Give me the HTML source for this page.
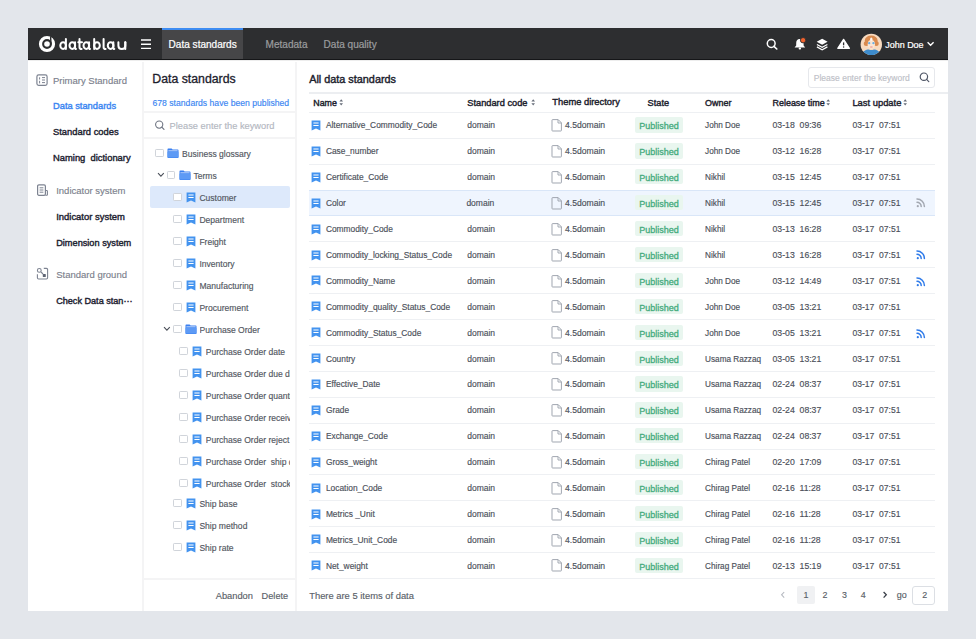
<!DOCTYPE html>
<html><head><meta charset="utf-8"><style>
html,body{margin:0;padding:0}
body{width:976px;height:639px;background:#e3e6eb;position:relative;overflow:hidden;font-family:"Liberation Sans", sans-serif}
.t{position:absolute;white-space:nowrap}
.r{-webkit-text-stroke:0.15px currentColor}
.m{-webkit-text-stroke:0.4px currentColor}
</style></head><body>
<div style="position:absolute;left:28px;top:28px;width:920px;height:583px;background:#fff"></div>
<div style="position:absolute;left:28px;top:28px;width:920px;height:32px;background:#2d2e30"></div>
<div style="position:absolute;left:28px;top:58.8px;width:920px;height:1.2px;background:#151618"></div>
<div style="position:absolute;left:28px;top:60px;width:920px;height:1px;background:rgba(0,0,0,0.07)"></div>
<div style="position:absolute;left:162px;top:28px;width:81px;height:30.8px;background:#464648"></div>
<div style="position:absolute;left:162px;top:28px;width:81px;height:2px;background:#3e8cf2"></div>
<svg style="position:absolute;left:36px;top:32px" width="24" height="24" viewBox="0 0 24 24"><circle cx="11" cy="12" r="6.5" fill="none" stroke="#fff" stroke-width="3.2"/>
<circle cx="11" cy="12" r="2.8" fill="#fff"/>
<line x1="14.6" y1="4.2" x2="15" y2="12.5" stroke="#2d2e30" stroke-width="1.4"/></svg>
<svg style="position:absolute;left:0px;top:0px" width="976" height="64" viewBox="0 0 976 64"><ellipse cx="63.1" cy="45.6" rx="2.8" ry="3.35" fill="none" stroke="#fff" stroke-width="2.0"/><line x1="65.9" y1="39.0" x2="65.9" y2="49.0" stroke="#fff" stroke-width="2.0" stroke-linecap="round"/><ellipse cx="72.3" cy="45.6" rx="2.8" ry="3.35" fill="none" stroke="#fff" stroke-width="2.0"/><path d="M75.05 42.3 V47.9 Q75.05 49.0 76.0 48.9" fill="none" stroke="#fff" stroke-width="2.0" stroke-linecap="round"/><path d="M79.5 39.0 V47.2 Q79.5 49.0 81.6 49.0" fill="none" stroke="#fff" stroke-width="2.0" stroke-linecap="round"/><line x1="78.3" y1="42.3" x2="82.0" y2="42.3" stroke="#fff" stroke-width="2.0" stroke-linecap="round"/><ellipse cx="86.3" cy="45.6" rx="2.8" ry="3.35" fill="none" stroke="#fff" stroke-width="2.0"/><path d="M89.05 42.3 V47.9 Q89.05 49.0 90.0 48.9" fill="none" stroke="#fff" stroke-width="2.0" stroke-linecap="round"/><ellipse cx="97.0" cy="45.6" rx="2.8" ry="3.35" fill="none" stroke="#fff" stroke-width="2.0"/><line x1="94.2" y1="39.0" x2="94.2" y2="49.0" stroke="#fff" stroke-width="2.0" stroke-linecap="round"/><path d="M103.6 39.0 V47.2 Q103.6 49.0 105.6 49.0" fill="none" stroke="#fff" stroke-width="2.0" stroke-linecap="round"/><ellipse cx="110.6" cy="45.6" rx="2.8" ry="3.35" fill="none" stroke="#fff" stroke-width="2.0"/><path d="M113.35 42.3 V47.9 Q113.35 49.0 114.3 48.9" fill="none" stroke="#fff" stroke-width="2.0" stroke-linecap="round"/><path d="M118.4 42.3 V45.8 Q118.4 49.0 121.8 49.0 Q125.3 49.0 125.3 45.8 V42.3" fill="none" stroke="#fff" stroke-width="2.0" stroke-linecap="round"/><line x1="125.3" y1="42.3" x2="125.3" y2="49.0" stroke="#fff" stroke-width="2.0" stroke-linecap="round"/></svg>
<svg style="position:absolute;left:140px;top:38px" width="12" height="12" viewBox="0 0 12 12"><path d="M1 2H11M1 6.2H11M1 10.4H11" stroke="#fff" stroke-width="1.4"/></svg>
<div class="t m" style="left:168.60px;top:39.00px;font-size:10.05px;line-height:11px;color:#ffffff;font-weight:400;-webkit-text-stroke:0.22px #fff;">Data standards</div>
<div class="t m" style="left:265.60px;top:39.00px;font-size:10.05px;line-height:11px;color:#9b9c9e;font-weight:400;-webkit-text-stroke:0.22px #9b9c9e;">Metadata</div>
<div class="t m" style="left:323.60px;top:39.00px;font-size:10.05px;line-height:11px;color:#9b9c9e;font-weight:400;-webkit-text-stroke:0.22px #9b9c9e;">Data quality</div>
<svg style="position:absolute;left:764px;top:36px" width="16" height="16" viewBox="0 0 16 16"><circle cx="7.2" cy="7.5" r="3.9" fill="none" stroke="#fff" stroke-width="1.5"/><path d="M10 10.3L12.8 13" stroke="#fff" stroke-width="1.6" stroke-linecap="round"/></svg>
<svg style="position:absolute;left:792px;top:36px" width="16" height="16" viewBox="0 0 16 16"><path d="M7.8 3C5.2 3 4.2 5 4.2 7.2V9.6L2.6 11.4H13.2L11.6 9.6V7.2C11.6 5 10.4 3 7.8 3Z" fill="#fff"/><rect x="6.7" y="11.6" width="2.3" height="2" rx=".8" fill="#fff"/><circle cx="11.1" cy="4.2" r="2.7" fill="#f0622d" stroke="#2d2e30" stroke-width="0.9"/></svg>
<svg style="position:absolute;left:814px;top:36px" width="16" height="16" viewBox="0 0 16 16"><path d="M8.15 2.8L13.6 5.8L8.15 8.8L2.7 5.8Z" fill="#fff"/><path d="M2.9 8.5L8.15 11.4L13.4 8.5M2.9 10.9L8.15 13.8L13.4 10.9" fill="none" stroke="#fff" stroke-width="1.2"/></svg>
<svg style="position:absolute;left:835px;top:36px" width="16" height="16" viewBox="0 0 16 16"><path d="M8.6 3.4L14.4 12.3H2.8Z" fill="#fff" stroke="#fff" stroke-width="1.3" stroke-linejoin="round"/><path d="M8.6 6.4V9.3" stroke="#2d2e30" stroke-width="1.3"/><circle cx="8.6" cy="10.9" r="0.75" fill="#2d2e30"/></svg>
<svg style="position:absolute;left:860px;top:33px" width="23" height="23" viewBox="0 0 23 23"><defs><clipPath id="av"><circle cx="11.3" cy="11.4" r="10.7"/></clipPath></defs>
<circle cx="11.3" cy="11.4" r="10.7" fill="#f8dbc0"/>
<g clip-path="url(#av)">
<ellipse cx="11.2" cy="7.6" rx="6.4" ry="5" fill="#d98a4e"/>
<circle cx="6.3" cy="10.6" r="2.5" fill="#d98a4e"/><circle cx="16.2" cy="10.6" r="2.5" fill="#d98a4e"/>
<ellipse cx="11.3" cy="11.3" rx="3.6" ry="4.4" fill="#fce6d3"/>
<ellipse cx="11.3" cy="6.4" rx="1.2" ry="1.8" fill="#fff6ee"/>
<circle cx="9.2" cy="10.2" r="1.1" fill="#68aee4"/><circle cx="13.4" cy="10.2" r="1.1" fill="#68aee4"/>
<ellipse cx="11.3" cy="14" rx="1.6" ry="0.7" fill="#f2a49c"/>
<path d="M1.5 23C2.5 18.5 5.5 16.6 8.8 16.6Q11.3 17.6 13.8 16.6C17 16.6 20 18.5 21 23Z" fill="#3e8ccc"/>
</g></svg>
<div class="t m" style="left:885.30px;top:40.00px;font-size:8.95px;line-height:10px;color:#ffffff;font-weight:400;-webkit-text-stroke:0.22px #fff;">John Doe</div>
<svg style="position:absolute;left:926px;top:40px" width="10" height="8" viewBox="0 0 10 8"><path d="M1.6 2.2L4.6 5.2L7.6 2.2" fill="none" stroke="#fff" stroke-width="1.4"/></svg>
<div style="position:absolute;left:141.8px;top:62px;width:2px;height:549px;background:#f4f4f5"></div>
<svg style="position:absolute;left:34px;top:72px" width="16" height="16" viewBox="0 0 16 16"><rect x="2.9" y="2.9" width="10.2" height="10.4" rx="1.8" fill="none" stroke="#7d8391" stroke-width="1.2"/><path d="M5.6 5.3v2.2M5.6 8.8v2.6M8 5.6h3M8 8h3M8 10.6h3" stroke="#7d8391" stroke-width="1"/></svg>
<div class="t r" style="left:53.00px;top:75.00px;font-size:9.5px;line-height:11px;color:#7c818d;font-weight:400;">Primary Standard</div>
<div class="t m" style="left:53.00px;top:101.20px;font-size:9.3px;line-height:10px;color:#3b86f2;font-weight:400;">Data standards</div>
<div class="t m" style="left:53.00px;top:126.00px;font-size:9.4px;line-height:11px;color:#1d2230;font-weight:400;">Standard codes</div>
<div class="t m" style="left:53.00px;top:152.00px;font-size:9.4px;line-height:11px;color:#1d2230;font-weight:400;">Naming&nbsp; dictionary</div>
<svg style="position:absolute;left:34px;top:182px" width="16" height="16" viewBox="0 0 16 16"><rect x="3.6" y="2.9" width="7.8" height="10.4" rx="1.3" fill="none" stroke="#7d8391" stroke-width="1.2"/><path d="M11.4 8.5h1.2a.8.8 0 0 1 .8.8v3.2a.8.8 0 0 1-.8.8h-1.2" fill="none" stroke="#7d8391" stroke-width="1.1"/><path d="M5.6 5.8h3.8M5.6 8h3.8M5.6 10.2h3.8" stroke="#7d8391" stroke-width="1"/></svg>
<div class="t r" style="left:56.20px;top:185.00px;font-size:9.5px;line-height:11px;color:#7c818d;font-weight:400;">Indicator system</div>
<div class="t m" style="left:56.20px;top:211.00px;font-size:9.45px;line-height:11px;color:#1d2230;font-weight:400;">Indicator system</div>
<div class="t m" style="left:56.20px;top:237.60px;font-size:9.2px;line-height:10px;color:#1d2230;font-weight:400;">Dimension system</div>
<svg style="position:absolute;left:34px;top:265px" width="16" height="16" viewBox="0 0 16 16"><circle cx="5.3" cy="5.4" r="1.9" fill="none" stroke="#7d8391" stroke-width="1.1"/><path d="M7 7L9 9" stroke="#7d8391" stroke-width="1.1"/><path d="M9.8 3.4h2.6a1.2 1.2 0 0 1 1.2 1.2v8.2a1.2 1.2 0 0 1-1.2 1.2H4.6a1.2 1.2 0 0 1-1.2-1.2V9.2" fill="none" stroke="#7d8391" stroke-width="1.1"/><rect x="8.8" y="9" width="3" height="3" rx=".6" fill="#5f6574"/></svg>
<div class="t r" style="left:56.20px;top:269.00px;font-size:9.5px;line-height:11px;color:#7c818d;font-weight:400;">Standard ground</div>
<div class="t m" style="left:56.20px;top:295.80px;font-size:9.1px;line-height:10px;color:#1d2230;font-weight:400;">Check Data stan···</div>
<div style="position:absolute;left:295px;top:62px;width:2px;height:549px;background:#f4f4f5"></div>
<div class="t m" style="left:152.30px;top:72.40px;font-size:12.3px;line-height:14px;color:#1b202c;font-weight:400;-webkit-text-stroke:0.3px #1b202c;">Data standards</div>
<div class="t r" style="left:152.50px;top:98.00px;font-size:8.65px;line-height:10px;color:#3b86f2;font-weight:400;">678 standards have been published</div>
<div style="position:absolute;left:143px;top:111px;width:152px;height:2px;background:#f4f4f5"></div>
<svg style="position:absolute;left:153px;top:118px" width="14" height="14" viewBox="0 0 14 14"><circle cx="6.2" cy="6.6" r="3.6" fill="none" stroke="#6f7582" stroke-width="1.1"/><path d="M8.8 9.2L11 11.4" stroke="#6f7582" stroke-width="1.2" stroke-linecap="round"/></svg>
<div class="t r" style="left:169.60px;top:121.20px;font-size:9.3px;line-height:10px;color:#b3b7bf;font-weight:400;">Please enter the keyword</div>
<div style="position:absolute;left:143px;top:137px;width:152px;height:2px;background:#f4f4f5"></div>
<div style="position:absolute;left:149.5px;top:186.2px;width:140.5px;height:21.4px;background:#dde9fb;border-radius:2px"></div>
<div style="position:absolute;left:155.40px;top:148.70px;width:8.6px;height:8.6px;box-sizing:border-box;border:1px solid #d0d4da;border-radius:1.2px;background:#fff"></div>
<svg style="position:absolute;left:167.2px;top:148px" width="12" height="10" viewBox="0 0 12 10"><path d="M0.5 1.2a.7.7 0 0 1 .7-.7h3.4l1 1.1h5.2a.7.7 0 0 1 .7.7v6.9a.7.7 0 0 1-.7.7H1.2a.7.7 0 0 1-.7-.7z" fill="#3b80f0"/><rect x="1.4" y="2.3" width="9.2" height="1.1" fill="#c3d8f9"/><rect x="0.5" y="3.4" width="11" height="6.1" rx=".6" fill="#5d9af5"/></svg>
<div class="t r" style="left:182.00px;top:147.50px;width:108.20px;overflow:hidden;font-size:8.55px;line-height:12px;color:#525761">Business glossary</div>
<svg style="position:absolute;left:157.0px;top:172px" width="8" height="6" viewBox="0 0 8 6"><path d="M1 1.2L3.9 4.2L6.8 1.2" fill="none" stroke="#4b505a" stroke-width="1.1"/></svg>
<div style="position:absolute;left:166.80px;top:170.70px;width:8.6px;height:8.6px;box-sizing:border-box;border:1px solid #d0d4da;border-radius:1.2px;background:#fff"></div>
<svg style="position:absolute;left:178.6px;top:170px" width="12" height="10" viewBox="0 0 12 10"><path d="M0.5 1.2a.7.7 0 0 1 .7-.7h3.4l1 1.1h5.2a.7.7 0 0 1 .7.7v6.9a.7.7 0 0 1-.7.7H1.2a.7.7 0 0 1-.7-.7z" fill="#3b80f0"/><rect x="1.4" y="2.3" width="9.2" height="1.1" fill="#c3d8f9"/><rect x="0.5" y="3.4" width="11" height="6.1" rx=".6" fill="#5d9af5"/></svg>
<div class="t r" style="left:193.40px;top:169.50px;width:96.80px;overflow:hidden;font-size:8.55px;line-height:12px;color:#525761">Terms</div>
<div style="position:absolute;left:173.00px;top:192.70px;width:8.6px;height:8.6px;box-sizing:border-box;border:1px solid #d0d4da;border-radius:1.2px;background:#fff"></div>
<svg style="position:absolute;left:185.9px;top:192px" width="10" height="11" viewBox="0 0 10 11"><path d="M0.6 0.4H9.4V10.4L5 8.6L0.6 10.4Z" fill="#4393ef"/><path d="M2.4 3H7.6M2.4 5.5H7.6" stroke="#fff" stroke-width="1.1"/></svg>
<div class="t r" style="left:199.40px;top:191.50px;width:90.80px;overflow:hidden;font-size:8.55px;line-height:12px;color:#525761">Customer</div>
<div style="position:absolute;left:173.00px;top:214.70px;width:8.6px;height:8.6px;box-sizing:border-box;border:1px solid #d0d4da;border-radius:1.2px;background:#fff"></div>
<svg style="position:absolute;left:185.9px;top:214px" width="10" height="11" viewBox="0 0 10 11"><path d="M0.6 0.4H9.4V10.4L5 8.6L0.6 10.4Z" fill="#4393ef"/><path d="M2.4 3H7.6M2.4 5.5H7.6" stroke="#fff" stroke-width="1.1"/></svg>
<div class="t r" style="left:199.40px;top:213.50px;width:90.80px;overflow:hidden;font-size:8.55px;line-height:12px;color:#525761">Department</div>
<div style="position:absolute;left:173.00px;top:236.70px;width:8.6px;height:8.6px;box-sizing:border-box;border:1px solid #d0d4da;border-radius:1.2px;background:#fff"></div>
<svg style="position:absolute;left:185.9px;top:236px" width="10" height="11" viewBox="0 0 10 11"><path d="M0.6 0.4H9.4V10.4L5 8.6L0.6 10.4Z" fill="#4393ef"/><path d="M2.4 3H7.6M2.4 5.5H7.6" stroke="#fff" stroke-width="1.1"/></svg>
<div class="t r" style="left:199.40px;top:235.50px;width:90.80px;overflow:hidden;font-size:8.55px;line-height:12px;color:#525761">Freight</div>
<div style="position:absolute;left:173.00px;top:258.70px;width:8.6px;height:8.6px;box-sizing:border-box;border:1px solid #d0d4da;border-radius:1.2px;background:#fff"></div>
<svg style="position:absolute;left:185.9px;top:258px" width="10" height="11" viewBox="0 0 10 11"><path d="M0.6 0.4H9.4V10.4L5 8.6L0.6 10.4Z" fill="#4393ef"/><path d="M2.4 3H7.6M2.4 5.5H7.6" stroke="#fff" stroke-width="1.1"/></svg>
<div class="t r" style="left:199.40px;top:257.50px;width:90.80px;overflow:hidden;font-size:8.55px;line-height:12px;color:#525761">Inventory</div>
<div style="position:absolute;left:173.00px;top:280.70px;width:8.6px;height:8.6px;box-sizing:border-box;border:1px solid #d0d4da;border-radius:1.2px;background:#fff"></div>
<svg style="position:absolute;left:185.9px;top:280px" width="10" height="11" viewBox="0 0 10 11"><path d="M0.6 0.4H9.4V10.4L5 8.6L0.6 10.4Z" fill="#4393ef"/><path d="M2.4 3H7.6M2.4 5.5H7.6" stroke="#fff" stroke-width="1.1"/></svg>
<div class="t r" style="left:199.40px;top:279.50px;width:90.80px;overflow:hidden;font-size:8.55px;line-height:12px;color:#525761">Manufacturing</div>
<div style="position:absolute;left:173.00px;top:302.70px;width:8.6px;height:8.6px;box-sizing:border-box;border:1px solid #d0d4da;border-radius:1.2px;background:#fff"></div>
<svg style="position:absolute;left:185.9px;top:302px" width="10" height="11" viewBox="0 0 10 11"><path d="M0.6 0.4H9.4V10.4L5 8.6L0.6 10.4Z" fill="#4393ef"/><path d="M2.4 3H7.6M2.4 5.5H7.6" stroke="#fff" stroke-width="1.1"/></svg>
<div class="t r" style="left:199.40px;top:301.50px;width:90.80px;overflow:hidden;font-size:8.55px;line-height:12px;color:#525761">Procurement</div>
<svg style="position:absolute;left:163.2px;top:326px" width="8" height="6" viewBox="0 0 8 6"><path d="M1 1.2L3.9 4.2L6.8 1.2" fill="none" stroke="#4b505a" stroke-width="1.1"/></svg>
<div style="position:absolute;left:173.00px;top:324.70px;width:8.6px;height:8.6px;box-sizing:border-box;border:1px solid #d0d4da;border-radius:1.2px;background:#fff"></div>
<svg style="position:absolute;left:184.8px;top:324px" width="12" height="10" viewBox="0 0 12 10"><path d="M0.5 1.2a.7.7 0 0 1 .7-.7h3.4l1 1.1h5.2a.7.7 0 0 1 .7.7v6.9a.7.7 0 0 1-.7.7H1.2a.7.7 0 0 1-.7-.7z" fill="#3b80f0"/><rect x="1.4" y="2.3" width="9.2" height="1.1" fill="#c3d8f9"/><rect x="0.5" y="3.4" width="11" height="6.1" rx=".6" fill="#5d9af5"/></svg>
<div class="t r" style="left:199.60px;top:323.50px;width:90.60px;overflow:hidden;font-size:8.55px;line-height:12px;color:#525761">Purchase Order</div>
<div style="position:absolute;left:179.30px;top:346.70px;width:8.6px;height:8.6px;box-sizing:border-box;border:1px solid #d0d4da;border-radius:1.2px;background:#fff"></div>
<svg style="position:absolute;left:192.2px;top:346px" width="10" height="11" viewBox="0 0 10 11"><path d="M0.6 0.4H9.4V10.4L5 8.6L0.6 10.4Z" fill="#4393ef"/><path d="M2.4 3H7.6M2.4 5.5H7.6" stroke="#fff" stroke-width="1.1"/></svg>
<div class="t r" style="left:205.70px;top:345.50px;width:84.50px;overflow:hidden;font-size:8.55px;line-height:12px;color:#525761">Purchase Order date</div>
<div style="position:absolute;left:179.30px;top:368.70px;width:8.6px;height:8.6px;box-sizing:border-box;border:1px solid #d0d4da;border-radius:1.2px;background:#fff"></div>
<svg style="position:absolute;left:192.2px;top:368px" width="10" height="11" viewBox="0 0 10 11"><path d="M0.6 0.4H9.4V10.4L5 8.6L0.6 10.4Z" fill="#4393ef"/><path d="M2.4 3H7.6M2.4 5.5H7.6" stroke="#fff" stroke-width="1.1"/></svg>
<div class="t r" style="left:205.70px;top:367.50px;width:84.50px;overflow:hidden;font-size:8.55px;line-height:12px;color:#525761">Purchase Order due date</div>
<div style="position:absolute;left:179.30px;top:390.70px;width:8.6px;height:8.6px;box-sizing:border-box;border:1px solid #d0d4da;border-radius:1.2px;background:#fff"></div>
<svg style="position:absolute;left:192.2px;top:390px" width="10" height="11" viewBox="0 0 10 11"><path d="M0.6 0.4H9.4V10.4L5 8.6L0.6 10.4Z" fill="#4393ef"/><path d="M2.4 3H7.6M2.4 5.5H7.6" stroke="#fff" stroke-width="1.1"/></svg>
<div class="t r" style="left:205.70px;top:389.50px;width:84.50px;overflow:hidden;font-size:8.55px;line-height:12px;color:#525761">Purchase Order quantity</div>
<div style="position:absolute;left:179.30px;top:412.70px;width:8.6px;height:8.6px;box-sizing:border-box;border:1px solid #d0d4da;border-radius:1.2px;background:#fff"></div>
<svg style="position:absolute;left:192.2px;top:412px" width="10" height="11" viewBox="0 0 10 11"><path d="M0.6 0.4H9.4V10.4L5 8.6L0.6 10.4Z" fill="#4393ef"/><path d="M2.4 3H7.6M2.4 5.5H7.6" stroke="#fff" stroke-width="1.1"/></svg>
<div class="t r" style="left:205.70px;top:411.50px;width:84.50px;overflow:hidden;font-size:8.55px;line-height:12px;color:#525761">Purchase Order receive</div>
<div style="position:absolute;left:179.30px;top:434.70px;width:8.6px;height:8.6px;box-sizing:border-box;border:1px solid #d0d4da;border-radius:1.2px;background:#fff"></div>
<svg style="position:absolute;left:192.2px;top:434px" width="10" height="11" viewBox="0 0 10 11"><path d="M0.6 0.4H9.4V10.4L5 8.6L0.6 10.4Z" fill="#4393ef"/><path d="M2.4 3H7.6M2.4 5.5H7.6" stroke="#fff" stroke-width="1.1"/></svg>
<div class="t r" style="left:205.70px;top:433.50px;width:84.50px;overflow:hidden;font-size:8.55px;line-height:12px;color:#525761">Purchase Order reject</div>
<div style="position:absolute;left:179.30px;top:456.70px;width:8.6px;height:8.6px;box-sizing:border-box;border:1px solid #d0d4da;border-radius:1.2px;background:#fff"></div>
<svg style="position:absolute;left:192.2px;top:456px" width="10" height="11" viewBox="0 0 10 11"><path d="M0.6 0.4H9.4V10.4L5 8.6L0.6 10.4Z" fill="#4393ef"/><path d="M2.4 3H7.6M2.4 5.5H7.6" stroke="#fff" stroke-width="1.1"/></svg>
<div class="t r" style="left:205.70px;top:455.50px;width:84.50px;overflow:hidden;font-size:8.55px;line-height:12px;color:#525761">Purchase Order&nbsp; ship date</div>
<div style="position:absolute;left:179.30px;top:478.70px;width:8.6px;height:8.6px;box-sizing:border-box;border:1px solid #d0d4da;border-radius:1.2px;background:#fff"></div>
<svg style="position:absolute;left:192.2px;top:478px" width="10" height="11" viewBox="0 0 10 11"><path d="M0.6 0.4H9.4V10.4L5 8.6L0.6 10.4Z" fill="#4393ef"/><path d="M2.4 3H7.6M2.4 5.5H7.6" stroke="#fff" stroke-width="1.1"/></svg>
<div class="t r" style="left:205.70px;top:477.50px;width:84.50px;overflow:hidden;font-size:8.55px;line-height:12px;color:#525761">Purchase Order&nbsp; stock</div>
<div style="position:absolute;left:173.00px;top:498.70px;width:8.6px;height:8.6px;box-sizing:border-box;border:1px solid #d0d4da;border-radius:1.2px;background:#fff"></div>
<svg style="position:absolute;left:185.9px;top:498px" width="10" height="11" viewBox="0 0 10 11"><path d="M0.6 0.4H9.4V10.4L5 8.6L0.6 10.4Z" fill="#4393ef"/><path d="M2.4 3H7.6M2.4 5.5H7.6" stroke="#fff" stroke-width="1.1"/></svg>
<div class="t r" style="left:199.40px;top:497.50px;width:90.80px;overflow:hidden;font-size:8.55px;line-height:12px;color:#525761">Ship base</div>
<div style="position:absolute;left:173.00px;top:520.70px;width:8.6px;height:8.6px;box-sizing:border-box;border:1px solid #d0d4da;border-radius:1.2px;background:#fff"></div>
<svg style="position:absolute;left:185.9px;top:520px" width="10" height="11" viewBox="0 0 10 11"><path d="M0.6 0.4H9.4V10.4L5 8.6L0.6 10.4Z" fill="#4393ef"/><path d="M2.4 3H7.6M2.4 5.5H7.6" stroke="#fff" stroke-width="1.1"/></svg>
<div class="t r" style="left:199.40px;top:519.50px;width:90.80px;overflow:hidden;font-size:8.55px;line-height:12px;color:#525761">Ship method</div>
<div style="position:absolute;left:173.00px;top:542.70px;width:8.6px;height:8.6px;box-sizing:border-box;border:1px solid #d0d4da;border-radius:1.2px;background:#fff"></div>
<svg style="position:absolute;left:185.9px;top:542px" width="10" height="11" viewBox="0 0 10 11"><path d="M0.6 0.4H9.4V10.4L5 8.6L0.6 10.4Z" fill="#4393ef"/><path d="M2.4 3H7.6M2.4 5.5H7.6" stroke="#fff" stroke-width="1.1"/></svg>
<div class="t r" style="left:199.40px;top:541.50px;width:90.80px;overflow:hidden;font-size:8.55px;line-height:12px;color:#525761">Ship rate</div>
<div style="position:absolute;left:143px;top:578px;width:152px;height:2px;background:#f4f4f5"></div>
<div class="t r" style="left:215.70px;top:590.60px;font-size:9.3px;line-height:10px;color:#5a5f69;font-weight:400;">Abandon</div>
<div class="t r" style="left:261.60px;top:590.60px;font-size:9.2px;line-height:10px;color:#5a5f69;font-weight:400;">Delete</div>
<div class="t m" style="left:309.20px;top:73.20px;font-size:10.85px;line-height:12px;color:#1b202c;font-weight:400;">All data standards</div>
<div style="position:absolute;left:807.5px;top:66.5px;width:127px;height:21.5px;box-sizing:border-box;border:1px solid #e6e8ec;border-radius:3px;background:#fff"></div>
<div class="t r" style="left:813.80px;top:72.60px;font-size:8.5px;line-height:10px;color:#bec1c8;font-weight:400;">Please enter the keyword</div>
<svg style="position:absolute;left:917px;top:70px" width="14" height="14" viewBox="0 0 14 14"><circle cx="6.9" cy="6.7" r="3.7" fill="none" stroke="#4f5666" stroke-width="1.2"/><path d="M9.6 9.4L11.8 11.6" stroke="#4f5666" stroke-width="1.2" stroke-linecap="round"/></svg>
<div style="position:absolute;left:309px;top:92px;width:639px;height:2px;background:#eceef1"></div>
<div class="t m" style="left:313.30px;top:98.00px;font-size:8.85px;line-height:10px;color:#1b202c;font-weight:400;">Name</div>
<svg style="position:absolute;left:338.6px;top:98px" width="5" height="8" viewBox="0 0 5 8"><path d="M0.4 3.4L2.2 1.2L4 3.4Z" fill="#666c78"/><path d="M0.4 5.2L2.2 7.4L4 5.2Z" fill="#666c78"/></svg>
<div class="t m" style="left:467.30px;top:98.20px;font-size:9.25px;line-height:10px;color:#1b202c;font-weight:400;">Standard code</div>
<svg style="position:absolute;left:530.6px;top:98px" width="5" height="8" viewBox="0 0 5 8"><path d="M0.4 3.4L2.2 1.2L4 3.4Z" fill="#666c78"/><path d="M0.4 5.2L2.2 7.4L4 5.2Z" fill="#666c78"/></svg>
<div class="t m" style="left:552.30px;top:97.40px;font-size:9.35px;line-height:10px;color:#1b202c;font-weight:400;">Theme directory</div>
<div class="t m" style="left:647.60px;top:98.20px;font-size:9.2px;line-height:10px;color:#1b202c;font-weight:400;">State</div>
<div class="t m" style="left:705.10px;top:98.20px;font-size:8.95px;line-height:10px;color:#1b202c;font-weight:400;">Owner</div>
<div class="t m" style="left:772.50px;top:98.20px;font-size:8.95px;line-height:10px;color:#1b202c;font-weight:400;">Release time</div>
<svg style="position:absolute;left:826.0px;top:98px" width="5" height="8" viewBox="0 0 5 8"><path d="M0.4 3.4L2.2 1.2L4 3.4Z" fill="#666c78"/><path d="M0.4 5.2L2.2 7.4L4 5.2Z" fill="#666c78"/></svg>
<div class="t m" style="left:852.40px;top:97.20px;font-size:9.4px;line-height:11px;color:#1b202c;font-weight:400;">Last update</div>
<svg style="position:absolute;left:903.0px;top:98px" width="5" height="8" viewBox="0 0 5 8"><path d="M0.4 3.4L2.2 1.2L4 3.4Z" fill="#666c78"/><path d="M0.4 5.2L2.2 7.4L4 5.2Z" fill="#666c78"/></svg>
<div style="position:absolute;left:309px;top:112px;width:626px;height:1px;background:#eef0f3"></div>
<div style="position:absolute;left:309px;top:137.70px;width:626px;height:1px;background:#eef0f3"></div>
<svg style="position:absolute;left:311.0px;top:120px" width="10" height="11" viewBox="0 0 10 11"><path d="M0.6 0.4H9.4V10.4L5 8.6L0.6 10.4Z" fill="#4393ef"/><path d="M2.4 3H7.6M2.4 5.5H7.6" stroke="#fff" stroke-width="1.1"/></svg>
<div class="t r" style="left:325.90px;top:120.00px;font-size:8.4px;line-height:10px;color:#4b505a;font-weight:400;">Alternative_Commodity_Code</div>
<div class="t r" style="left:467.20px;top:120.00px;font-size:8.5px;line-height:10px;color:#4b505a;font-weight:400;">domain</div>
<svg style="position:absolute;left:551px;top:119px" width="12" height="13" viewBox="0 0 12 13"><path d="M1.6 0.6H7.2L10.4 3.8V11.4a.6.6 0 0 1-.6.6H1.6a.6.6 0 0 1-.6-.6V1.2a.6.6 0 0 1 .6-.6z" fill="none" stroke="#9ba1ac" stroke-width="0.95"/><path d="M7 0.8V4H10.2" fill="none" stroke="#9ba1ac" stroke-width="0.9"/></svg>
<div class="t r" style="left:565.00px;top:120.00px;font-size:8.6px;line-height:10px;color:#4b505a;font-weight:400;">4.5domain</div>
<div style="position:absolute;left:635px;top:117.40px;width:48px;height:15.3px;background:#e9f6ef;border-radius:2px"></div>
<div class="t r" style="left:639.30px;top:120.60px;font-size:9.0px;line-height:10px;color:#44ab7c;font-weight:400;-webkit-text-stroke:0.3px #44ab7c;">Published</div>
<div class="t r" style="left:705.10px;top:121.00px;font-size:8.2px;line-height:9px;color:#4b505a;font-weight:400;">John Doe</div>
<div class="t r" style="left:772.50px;top:120.00px;font-size:8.7px;line-height:10px;color:#4b505a;font-weight:400;">03-18&nbsp; 09:36</div>
<div class="t r" style="left:852.40px;top:120.00px;font-size:8.55px;line-height:10px;color:#4b505a;font-weight:400;">03-17&nbsp; 07:51</div>
<div style="position:absolute;left:309px;top:163.60px;width:626px;height:1px;background:#eef0f3"></div>
<svg style="position:absolute;left:311.0px;top:146px" width="10" height="11" viewBox="0 0 10 11"><path d="M0.6 0.4H9.4V10.4L5 8.6L0.6 10.4Z" fill="#4393ef"/><path d="M2.4 3H7.6M2.4 5.5H7.6" stroke="#fff" stroke-width="1.1"/></svg>
<div class="t r" style="left:325.90px;top:146.00px;font-size:8.4px;line-height:10px;color:#4b505a;font-weight:400;">Case_number</div>
<div class="t r" style="left:467.20px;top:146.00px;font-size:8.5px;line-height:10px;color:#4b505a;font-weight:400;">domain</div>
<svg style="position:absolute;left:551px;top:145px" width="12" height="13" viewBox="0 0 12 13"><path d="M1.6 0.6H7.2L10.4 3.8V11.4a.6.6 0 0 1-.6.6H1.6a.6.6 0 0 1-.6-.6V1.2a.6.6 0 0 1 .6-.6z" fill="none" stroke="#9ba1ac" stroke-width="0.95"/><path d="M7 0.8V4H10.2" fill="none" stroke="#9ba1ac" stroke-width="0.9"/></svg>
<div class="t r" style="left:565.00px;top:146.00px;font-size:8.6px;line-height:10px;color:#4b505a;font-weight:400;">4.5domain</div>
<div style="position:absolute;left:635px;top:143.30px;width:48px;height:15.3px;background:#e9f6ef;border-radius:2px"></div>
<div class="t r" style="left:639.30px;top:146.60px;font-size:9.0px;line-height:10px;color:#44ab7c;font-weight:400;-webkit-text-stroke:0.3px #44ab7c;">Published</div>
<div class="t r" style="left:705.10px;top:147.00px;font-size:8.2px;line-height:9px;color:#4b505a;font-weight:400;">John Doe</div>
<div class="t r" style="left:772.50px;top:146.00px;font-size:8.7px;line-height:10px;color:#4b505a;font-weight:400;">03-12&nbsp; 16:28</div>
<div class="t r" style="left:852.40px;top:146.00px;font-size:8.55px;line-height:10px;color:#4b505a;font-weight:400;">03-17&nbsp; 07:51</div>
<div style="position:absolute;left:309px;top:189.50px;width:626px;height:1px;background:#eef0f3"></div>
<svg style="position:absolute;left:311.0px;top:172px" width="10" height="11" viewBox="0 0 10 11"><path d="M0.6 0.4H9.4V10.4L5 8.6L0.6 10.4Z" fill="#4393ef"/><path d="M2.4 3H7.6M2.4 5.5H7.6" stroke="#fff" stroke-width="1.1"/></svg>
<div class="t r" style="left:325.90px;top:172.00px;font-size:8.4px;line-height:10px;color:#4b505a;font-weight:400;">Certificate_Code</div>
<div class="t r" style="left:467.20px;top:172.00px;font-size:8.5px;line-height:10px;color:#4b505a;font-weight:400;">domain</div>
<svg style="position:absolute;left:551px;top:171px" width="12" height="13" viewBox="0 0 12 13"><path d="M1.6 0.6H7.2L10.4 3.8V11.4a.6.6 0 0 1-.6.6H1.6a.6.6 0 0 1-.6-.6V1.2a.6.6 0 0 1 .6-.6z" fill="none" stroke="#9ba1ac" stroke-width="0.95"/><path d="M7 0.8V4H10.2" fill="none" stroke="#9ba1ac" stroke-width="0.9"/></svg>
<div class="t r" style="left:565.00px;top:172.00px;font-size:8.6px;line-height:10px;color:#4b505a;font-weight:400;">4.5domain</div>
<div style="position:absolute;left:635px;top:169.20px;width:48px;height:15.3px;background:#e9f6ef;border-radius:2px"></div>
<div class="t r" style="left:639.30px;top:172.60px;font-size:9.0px;line-height:10px;color:#44ab7c;font-weight:400;-webkit-text-stroke:0.3px #44ab7c;">Published</div>
<div class="t r" style="left:705.10px;top:173.00px;font-size:8.2px;line-height:9px;color:#4b505a;font-weight:400;">Nikhil</div>
<div class="t r" style="left:772.50px;top:172.00px;font-size:8.7px;line-height:10px;color:#4b505a;font-weight:400;">03-15&nbsp; 12:45</div>
<div class="t r" style="left:852.40px;top:172.00px;font-size:8.55px;line-height:10px;color:#4b505a;font-weight:400;">03-17&nbsp; 07:51</div>
<div style="position:absolute;left:309px;top:189.70px;width:626px;height:26.70px;box-sizing:border-box;background:#eff5fe;border-top:1.3px solid #d9e6f8;border-bottom:1.5px solid #d9e6f8"></div>
<svg style="position:absolute;left:311.0px;top:198px" width="10" height="11" viewBox="0 0 10 11"><path d="M0.6 0.4H9.4V10.4L5 8.6L0.6 10.4Z" fill="#4393ef"/><path d="M2.4 3H7.6M2.4 5.5H7.6" stroke="#fff" stroke-width="1.1"/></svg>
<div class="t r" style="left:325.90px;top:198.00px;font-size:8.4px;line-height:10px;color:#4b505a;font-weight:400;">Color</div>
<div class="t r" style="left:466.40px;top:198.00px;font-size:8.5px;line-height:10px;color:#4b505a;font-weight:400;">domain</div>
<svg style="position:absolute;left:551px;top:197px" width="12" height="13" viewBox="0 0 12 13"><path d="M1.6 0.6H7.2L10.4 3.8V11.4a.6.6 0 0 1-.6.6H1.6a.6.6 0 0 1-.6-.6V1.2a.6.6 0 0 1 .6-.6z" fill="none" stroke="#9ba1ac" stroke-width="0.95"/><path d="M7 0.8V4H10.2" fill="none" stroke="#9ba1ac" stroke-width="0.9"/></svg>
<div class="t r" style="left:565.00px;top:198.00px;font-size:8.6px;line-height:10px;color:#4b505a;font-weight:400;">4.5domain</div>
<div style="position:absolute;left:635px;top:195.10px;width:48px;height:15.3px;background:#e9f6ef;border-radius:2px"></div>
<div class="t r" style="left:639.30px;top:198.60px;font-size:9.0px;line-height:10px;color:#44ab7c;font-weight:400;-webkit-text-stroke:0.3px #44ab7c;">Published</div>
<div class="t r" style="left:705.10px;top:199.00px;font-size:8.2px;line-height:9px;color:#4b505a;font-weight:400;">Nikhil</div>
<div class="t r" style="left:772.50px;top:198.00px;font-size:8.7px;line-height:10px;color:#4b505a;font-weight:400;">03-15&nbsp; 12:45</div>
<div class="t r" style="left:852.40px;top:198.00px;font-size:8.55px;line-height:10px;color:#4b505a;font-weight:400;">03-17&nbsp; 07:51</div>
<svg style="position:absolute;left:915px;top:197px" width="13" height="12" viewBox="0 0 13 12"><circle cx="2.8" cy="9.2" r="1.1" fill="#a3a8b1"/><path d="M2 5.2a4.2 4.2 0 0 1 4.2 4.2M2 2a7.4 7.4 0 0 1 7.4 7.4" fill="none" stroke="#a3a8b1" stroke-width="1.5" stroke-linecap="round"/></svg>
<div style="position:absolute;left:309px;top:241.30px;width:626px;height:1px;background:#eef0f3"></div>
<svg style="position:absolute;left:311.0px;top:224px" width="10" height="11" viewBox="0 0 10 11"><path d="M0.6 0.4H9.4V10.4L5 8.6L0.6 10.4Z" fill="#4393ef"/><path d="M2.4 3H7.6M2.4 5.5H7.6" stroke="#fff" stroke-width="1.1"/></svg>
<div class="t r" style="left:325.90px;top:224.00px;font-size:8.4px;line-height:10px;color:#4b505a;font-weight:400;">Commodity_Code</div>
<div class="t r" style="left:467.20px;top:224.00px;font-size:8.5px;line-height:10px;color:#4b505a;font-weight:400;">domain</div>
<svg style="position:absolute;left:551px;top:223px" width="12" height="13" viewBox="0 0 12 13"><path d="M1.6 0.6H7.2L10.4 3.8V11.4a.6.6 0 0 1-.6.6H1.6a.6.6 0 0 1-.6-.6V1.2a.6.6 0 0 1 .6-.6z" fill="none" stroke="#9ba1ac" stroke-width="0.95"/><path d="M7 0.8V4H10.2" fill="none" stroke="#9ba1ac" stroke-width="0.9"/></svg>
<div class="t r" style="left:565.00px;top:224.00px;font-size:8.6px;line-height:10px;color:#4b505a;font-weight:400;">4.5domain</div>
<div style="position:absolute;left:635px;top:221.00px;width:48px;height:15.3px;background:#e9f6ef;border-radius:2px"></div>
<div class="t r" style="left:639.30px;top:224.60px;font-size:9.0px;line-height:10px;color:#44ab7c;font-weight:400;-webkit-text-stroke:0.3px #44ab7c;">Published</div>
<div class="t r" style="left:705.10px;top:225.00px;font-size:8.2px;line-height:9px;color:#4b505a;font-weight:400;">Nikhil</div>
<div class="t r" style="left:772.50px;top:224.00px;font-size:8.7px;line-height:10px;color:#4b505a;font-weight:400;">03-13&nbsp; 16:28</div>
<div class="t r" style="left:852.40px;top:224.00px;font-size:8.55px;line-height:10px;color:#4b505a;font-weight:400;">03-17&nbsp; 07:51</div>
<div style="position:absolute;left:309px;top:267.20px;width:626px;height:1px;background:#eef0f3"></div>
<svg style="position:absolute;left:311.0px;top:250px" width="10" height="11" viewBox="0 0 10 11"><path d="M0.6 0.4H9.4V10.4L5 8.6L0.6 10.4Z" fill="#4393ef"/><path d="M2.4 3H7.6M2.4 5.5H7.6" stroke="#fff" stroke-width="1.1"/></svg>
<div class="t r" style="left:325.90px;top:250.00px;font-size:8.4px;line-height:10px;color:#4b505a;font-weight:400;">Commodity_locking_Status_Code</div>
<div class="t r" style="left:467.20px;top:250.00px;font-size:8.5px;line-height:10px;color:#4b505a;font-weight:400;">domain</div>
<svg style="position:absolute;left:551px;top:249px" width="12" height="13" viewBox="0 0 12 13"><path d="M1.6 0.6H7.2L10.4 3.8V11.4a.6.6 0 0 1-.6.6H1.6a.6.6 0 0 1-.6-.6V1.2a.6.6 0 0 1 .6-.6z" fill="none" stroke="#9ba1ac" stroke-width="0.95"/><path d="M7 0.8V4H10.2" fill="none" stroke="#9ba1ac" stroke-width="0.9"/></svg>
<div class="t r" style="left:565.00px;top:250.00px;font-size:8.6px;line-height:10px;color:#4b505a;font-weight:400;">4.5domain</div>
<div style="position:absolute;left:635px;top:246.90px;width:48px;height:15.3px;background:#e9f6ef;border-radius:2px"></div>
<div class="t r" style="left:639.30px;top:250.60px;font-size:9.0px;line-height:10px;color:#44ab7c;font-weight:400;-webkit-text-stroke:0.3px #44ab7c;">Published</div>
<div class="t r" style="left:705.10px;top:251.00px;font-size:8.2px;line-height:9px;color:#4b505a;font-weight:400;">Nikhil</div>
<div class="t r" style="left:772.50px;top:250.00px;font-size:8.7px;line-height:10px;color:#4b505a;font-weight:400;">03-13&nbsp; 16:28</div>
<div class="t r" style="left:852.40px;top:250.00px;font-size:8.55px;line-height:10px;color:#4b505a;font-weight:400;">03-17&nbsp; 07:51</div>
<svg style="position:absolute;left:915px;top:249px" width="13" height="12" viewBox="0 0 13 12"><circle cx="2.8" cy="9.2" r="1.1" fill="#2f7bea"/><path d="M2 5.2a4.2 4.2 0 0 1 4.2 4.2M2 2a7.4 7.4 0 0 1 7.4 7.4" fill="none" stroke="#2f7bea" stroke-width="1.5" stroke-linecap="round"/></svg>
<div style="position:absolute;left:309px;top:293.10px;width:626px;height:1px;background:#eef0f3"></div>
<svg style="position:absolute;left:311.0px;top:275px" width="10" height="11" viewBox="0 0 10 11"><path d="M0.6 0.4H9.4V10.4L5 8.6L0.6 10.4Z" fill="#4393ef"/><path d="M2.4 3H7.6M2.4 5.5H7.6" stroke="#fff" stroke-width="1.1"/></svg>
<div class="t r" style="left:325.90px;top:276.00px;font-size:8.4px;line-height:10px;color:#4b505a;font-weight:400;">Commodity_Name</div>
<div class="t r" style="left:467.20px;top:276.00px;font-size:8.5px;line-height:10px;color:#4b505a;font-weight:400;">domain</div>
<svg style="position:absolute;left:551px;top:275px" width="12" height="13" viewBox="0 0 12 13"><path d="M1.6 0.6H7.2L10.4 3.8V11.4a.6.6 0 0 1-.6.6H1.6a.6.6 0 0 1-.6-.6V1.2a.6.6 0 0 1 .6-.6z" fill="none" stroke="#9ba1ac" stroke-width="0.95"/><path d="M7 0.8V4H10.2" fill="none" stroke="#9ba1ac" stroke-width="0.9"/></svg>
<div class="t r" style="left:565.00px;top:276.00px;font-size:8.6px;line-height:10px;color:#4b505a;font-weight:400;">4.5domain</div>
<div style="position:absolute;left:635px;top:272.80px;width:48px;height:15.3px;background:#e9f6ef;border-radius:2px"></div>
<div class="t r" style="left:639.30px;top:276.60px;font-size:9.0px;line-height:10px;color:#44ab7c;font-weight:400;-webkit-text-stroke:0.3px #44ab7c;">Published</div>
<div class="t r" style="left:705.10px;top:277.00px;font-size:8.2px;line-height:9px;color:#4b505a;font-weight:400;">John Doe</div>
<div class="t r" style="left:772.50px;top:276.00px;font-size:8.7px;line-height:10px;color:#4b505a;font-weight:400;">03-12&nbsp; 14:49</div>
<div class="t r" style="left:852.40px;top:276.00px;font-size:8.55px;line-height:10px;color:#4b505a;font-weight:400;">03-17&nbsp; 07:51</div>
<svg style="position:absolute;left:915px;top:276px" width="13" height="12" viewBox="0 0 13 12"><circle cx="2.8" cy="9.2" r="1.1" fill="#2f7bea"/><path d="M2 5.2a4.2 4.2 0 0 1 4.2 4.2M2 2a7.4 7.4 0 0 1 7.4 7.4" fill="none" stroke="#2f7bea" stroke-width="1.5" stroke-linecap="round"/></svg>
<div style="position:absolute;left:309px;top:319.00px;width:626px;height:1px;background:#eef0f3"></div>
<svg style="position:absolute;left:311.0px;top:301px" width="10" height="11" viewBox="0 0 10 11"><path d="M0.6 0.4H9.4V10.4L5 8.6L0.6 10.4Z" fill="#4393ef"/><path d="M2.4 3H7.6M2.4 5.5H7.6" stroke="#fff" stroke-width="1.1"/></svg>
<div class="t r" style="left:325.90px;top:302.00px;font-size:8.4px;line-height:10px;color:#4b505a;font-weight:400;">Commodity_quality_Status_Code</div>
<div class="t r" style="left:467.20px;top:302.00px;font-size:8.5px;line-height:10px;color:#4b505a;font-weight:400;">domain</div>
<svg style="position:absolute;left:551px;top:300px" width="12" height="13" viewBox="0 0 12 13"><path d="M1.6 0.6H7.2L10.4 3.8V11.4a.6.6 0 0 1-.6.6H1.6a.6.6 0 0 1-.6-.6V1.2a.6.6 0 0 1 .6-.6z" fill="none" stroke="#9ba1ac" stroke-width="0.95"/><path d="M7 0.8V4H10.2" fill="none" stroke="#9ba1ac" stroke-width="0.9"/></svg>
<div class="t r" style="left:565.00px;top:302.00px;font-size:8.6px;line-height:10px;color:#4b505a;font-weight:400;">4.5domain</div>
<div style="position:absolute;left:635px;top:298.70px;width:48px;height:15.3px;background:#e9f6ef;border-radius:2px"></div>
<div class="t r" style="left:639.30px;top:302.60px;font-size:9.0px;line-height:10px;color:#44ab7c;font-weight:400;-webkit-text-stroke:0.3px #44ab7c;">Published</div>
<div class="t r" style="left:705.10px;top:303.00px;font-size:8.2px;line-height:9px;color:#4b505a;font-weight:400;">John Doe</div>
<div class="t r" style="left:772.50px;top:302.00px;font-size:8.7px;line-height:10px;color:#4b505a;font-weight:400;">03-05&nbsp; 13:21</div>
<div class="t r" style="left:852.40px;top:302.00px;font-size:8.55px;line-height:10px;color:#4b505a;font-weight:400;">03-17&nbsp; 07:51</div>
<div style="position:absolute;left:309px;top:344.90px;width:626px;height:1px;background:#eef0f3"></div>
<svg style="position:absolute;left:311.0px;top:327px" width="10" height="11" viewBox="0 0 10 11"><path d="M0.6 0.4H9.4V10.4L5 8.6L0.6 10.4Z" fill="#4393ef"/><path d="M2.4 3H7.6M2.4 5.5H7.6" stroke="#fff" stroke-width="1.1"/></svg>
<div class="t r" style="left:325.90px;top:328.00px;font-size:8.4px;line-height:10px;color:#4b505a;font-weight:400;">Commodity_Status_Code</div>
<div class="t r" style="left:467.20px;top:328.00px;font-size:8.5px;line-height:10px;color:#4b505a;font-weight:400;">domain</div>
<svg style="position:absolute;left:551px;top:326px" width="12" height="13" viewBox="0 0 12 13"><path d="M1.6 0.6H7.2L10.4 3.8V11.4a.6.6 0 0 1-.6.6H1.6a.6.6 0 0 1-.6-.6V1.2a.6.6 0 0 1 .6-.6z" fill="none" stroke="#9ba1ac" stroke-width="0.95"/><path d="M7 0.8V4H10.2" fill="none" stroke="#9ba1ac" stroke-width="0.9"/></svg>
<div class="t r" style="left:565.00px;top:328.00px;font-size:8.6px;line-height:10px;color:#4b505a;font-weight:400;">4.5domain</div>
<div style="position:absolute;left:635px;top:324.60px;width:48px;height:15.3px;background:#e9f6ef;border-radius:2px"></div>
<div class="t r" style="left:639.30px;top:328.60px;font-size:9.0px;line-height:10px;color:#44ab7c;font-weight:400;-webkit-text-stroke:0.3px #44ab7c;">Published</div>
<div class="t r" style="left:705.10px;top:329.00px;font-size:8.2px;line-height:9px;color:#4b505a;font-weight:400;">John Doe</div>
<div class="t r" style="left:772.50px;top:328.00px;font-size:8.7px;line-height:10px;color:#4b505a;font-weight:400;">03-05&nbsp; 13:21</div>
<div class="t r" style="left:852.40px;top:328.00px;font-size:8.55px;line-height:10px;color:#4b505a;font-weight:400;">03-17&nbsp; 07:51</div>
<svg style="position:absolute;left:915px;top:328px" width="13" height="12" viewBox="0 0 13 12"><circle cx="2.8" cy="9.2" r="1.1" fill="#2f7bea"/><path d="M2 5.2a4.2 4.2 0 0 1 4.2 4.2M2 2a7.4 7.4 0 0 1 7.4 7.4" fill="none" stroke="#2f7bea" stroke-width="1.5" stroke-linecap="round"/></svg>
<div style="position:absolute;left:309px;top:370.80px;width:626px;height:1px;background:#eef0f3"></div>
<svg style="position:absolute;left:311.0px;top:353px" width="10" height="11" viewBox="0 0 10 11"><path d="M0.6 0.4H9.4V10.4L5 8.6L0.6 10.4Z" fill="#4393ef"/><path d="M2.4 3H7.6M2.4 5.5H7.6" stroke="#fff" stroke-width="1.1"/></svg>
<div class="t r" style="left:325.90px;top:354.00px;font-size:8.4px;line-height:10px;color:#4b505a;font-weight:400;">Country</div>
<div class="t r" style="left:467.20px;top:354.00px;font-size:8.5px;line-height:10px;color:#4b505a;font-weight:400;">domain</div>
<svg style="position:absolute;left:551px;top:352px" width="12" height="13" viewBox="0 0 12 13"><path d="M1.6 0.6H7.2L10.4 3.8V11.4a.6.6 0 0 1-.6.6H1.6a.6.6 0 0 1-.6-.6V1.2a.6.6 0 0 1 .6-.6z" fill="none" stroke="#9ba1ac" stroke-width="0.95"/><path d="M7 0.8V4H10.2" fill="none" stroke="#9ba1ac" stroke-width="0.9"/></svg>
<div class="t r" style="left:565.00px;top:354.00px;font-size:8.6px;line-height:10px;color:#4b505a;font-weight:400;">4.5domain</div>
<div style="position:absolute;left:635px;top:350.50px;width:48px;height:15.3px;background:#e9f6ef;border-radius:2px"></div>
<div class="t r" style="left:639.30px;top:354.60px;font-size:9.0px;line-height:10px;color:#44ab7c;font-weight:400;-webkit-text-stroke:0.3px #44ab7c;">Published</div>
<div class="t r" style="left:705.10px;top:355.00px;font-size:8.2px;line-height:9px;color:#4b505a;font-weight:400;">Usama Razzaq</div>
<div class="t r" style="left:772.50px;top:354.00px;font-size:8.7px;line-height:10px;color:#4b505a;font-weight:400;">03-05&nbsp; 13:21</div>
<div class="t r" style="left:852.40px;top:354.00px;font-size:8.55px;line-height:10px;color:#4b505a;font-weight:400;">03-17&nbsp; 07:51</div>
<div style="position:absolute;left:309px;top:396.70px;width:626px;height:1px;background:#eef0f3"></div>
<svg style="position:absolute;left:311.0px;top:379px" width="10" height="11" viewBox="0 0 10 11"><path d="M0.6 0.4H9.4V10.4L5 8.6L0.6 10.4Z" fill="#4393ef"/><path d="M2.4 3H7.6M2.4 5.5H7.6" stroke="#fff" stroke-width="1.1"/></svg>
<div class="t r" style="left:325.90px;top:379.00px;font-size:8.4px;line-height:10px;color:#4b505a;font-weight:400;">Effective_Date</div>
<div class="t r" style="left:467.20px;top:379.00px;font-size:8.5px;line-height:10px;color:#4b505a;font-weight:400;">domain</div>
<svg style="position:absolute;left:551px;top:378px" width="12" height="13" viewBox="0 0 12 13"><path d="M1.6 0.6H7.2L10.4 3.8V11.4a.6.6 0 0 1-.6.6H1.6a.6.6 0 0 1-.6-.6V1.2a.6.6 0 0 1 .6-.6z" fill="none" stroke="#9ba1ac" stroke-width="0.95"/><path d="M7 0.8V4H10.2" fill="none" stroke="#9ba1ac" stroke-width="0.9"/></svg>
<div class="t r" style="left:565.00px;top:379.00px;font-size:8.6px;line-height:10px;color:#4b505a;font-weight:400;">4.5domain</div>
<div style="position:absolute;left:635px;top:376.40px;width:48px;height:15.3px;background:#e9f6ef;border-radius:2px"></div>
<div class="t r" style="left:639.30px;top:379.60px;font-size:9.0px;line-height:10px;color:#44ab7c;font-weight:400;-webkit-text-stroke:0.3px #44ab7c;">Published</div>
<div class="t r" style="left:705.10px;top:380.00px;font-size:8.2px;line-height:9px;color:#4b505a;font-weight:400;">Usama Razzaq</div>
<div class="t r" style="left:772.50px;top:379.00px;font-size:8.7px;line-height:10px;color:#4b505a;font-weight:400;">02-24&nbsp; 08:37</div>
<div class="t r" style="left:852.40px;top:379.00px;font-size:8.55px;line-height:10px;color:#4b505a;font-weight:400;">03-17&nbsp; 07:51</div>
<div style="position:absolute;left:309px;top:422.60px;width:626px;height:1px;background:#eef0f3"></div>
<svg style="position:absolute;left:311.0px;top:405px" width="10" height="11" viewBox="0 0 10 11"><path d="M0.6 0.4H9.4V10.4L5 8.6L0.6 10.4Z" fill="#4393ef"/><path d="M2.4 3H7.6M2.4 5.5H7.6" stroke="#fff" stroke-width="1.1"/></svg>
<div class="t r" style="left:325.90px;top:405.00px;font-size:8.4px;line-height:10px;color:#4b505a;font-weight:400;">Grade</div>
<div class="t r" style="left:467.20px;top:405.00px;font-size:8.5px;line-height:10px;color:#4b505a;font-weight:400;">domain</div>
<svg style="position:absolute;left:551px;top:404px" width="12" height="13" viewBox="0 0 12 13"><path d="M1.6 0.6H7.2L10.4 3.8V11.4a.6.6 0 0 1-.6.6H1.6a.6.6 0 0 1-.6-.6V1.2a.6.6 0 0 1 .6-.6z" fill="none" stroke="#9ba1ac" stroke-width="0.95"/><path d="M7 0.8V4H10.2" fill="none" stroke="#9ba1ac" stroke-width="0.9"/></svg>
<div class="t r" style="left:565.00px;top:405.00px;font-size:8.6px;line-height:10px;color:#4b505a;font-weight:400;">4.5domain</div>
<div style="position:absolute;left:635px;top:402.30px;width:48px;height:15.3px;background:#e9f6ef;border-radius:2px"></div>
<div class="t r" style="left:639.30px;top:405.60px;font-size:9.0px;line-height:10px;color:#44ab7c;font-weight:400;-webkit-text-stroke:0.3px #44ab7c;">Published</div>
<div class="t r" style="left:705.10px;top:406.00px;font-size:8.2px;line-height:9px;color:#4b505a;font-weight:400;">Usama Razzaq</div>
<div class="t r" style="left:772.50px;top:405.00px;font-size:8.7px;line-height:10px;color:#4b505a;font-weight:400;">02-24&nbsp; 08:37</div>
<div class="t r" style="left:852.40px;top:405.00px;font-size:8.55px;line-height:10px;color:#4b505a;font-weight:400;">03-17&nbsp; 07:51</div>
<div style="position:absolute;left:309px;top:448.50px;width:626px;height:1px;background:#eef0f3"></div>
<svg style="position:absolute;left:311.0px;top:431px" width="10" height="11" viewBox="0 0 10 11"><path d="M0.6 0.4H9.4V10.4L5 8.6L0.6 10.4Z" fill="#4393ef"/><path d="M2.4 3H7.6M2.4 5.5H7.6" stroke="#fff" stroke-width="1.1"/></svg>
<div class="t r" style="left:325.90px;top:431.00px;font-size:8.4px;line-height:10px;color:#4b505a;font-weight:400;">Exchange_Code</div>
<div class="t r" style="left:467.20px;top:431.00px;font-size:8.5px;line-height:10px;color:#4b505a;font-weight:400;">domain</div>
<svg style="position:absolute;left:551px;top:430px" width="12" height="13" viewBox="0 0 12 13"><path d="M1.6 0.6H7.2L10.4 3.8V11.4a.6.6 0 0 1-.6.6H1.6a.6.6 0 0 1-.6-.6V1.2a.6.6 0 0 1 .6-.6z" fill="none" stroke="#9ba1ac" stroke-width="0.95"/><path d="M7 0.8V4H10.2" fill="none" stroke="#9ba1ac" stroke-width="0.9"/></svg>
<div class="t r" style="left:565.00px;top:431.00px;font-size:8.6px;line-height:10px;color:#4b505a;font-weight:400;">4.5domain</div>
<div style="position:absolute;left:635px;top:428.20px;width:48px;height:15.3px;background:#e9f6ef;border-radius:2px"></div>
<div class="t r" style="left:639.30px;top:431.60px;font-size:9.0px;line-height:10px;color:#44ab7c;font-weight:400;-webkit-text-stroke:0.3px #44ab7c;">Published</div>
<div class="t r" style="left:705.10px;top:432.00px;font-size:8.2px;line-height:9px;color:#4b505a;font-weight:400;">Usama Razzaq</div>
<div class="t r" style="left:772.50px;top:431.00px;font-size:8.7px;line-height:10px;color:#4b505a;font-weight:400;">02-24&nbsp; 08:37</div>
<div class="t r" style="left:852.40px;top:431.00px;font-size:8.55px;line-height:10px;color:#4b505a;font-weight:400;">03-17&nbsp; 07:51</div>
<div style="position:absolute;left:309px;top:474.40px;width:626px;height:1px;background:#eef0f3"></div>
<svg style="position:absolute;left:311.0px;top:457px" width="10" height="11" viewBox="0 0 10 11"><path d="M0.6 0.4H9.4V10.4L5 8.6L0.6 10.4Z" fill="#4393ef"/><path d="M2.4 3H7.6M2.4 5.5H7.6" stroke="#fff" stroke-width="1.1"/></svg>
<div class="t r" style="left:325.90px;top:457.00px;font-size:8.4px;line-height:10px;color:#4b505a;font-weight:400;">Gross_weight</div>
<div class="t r" style="left:467.20px;top:457.00px;font-size:8.5px;line-height:10px;color:#4b505a;font-weight:400;">domain</div>
<svg style="position:absolute;left:551px;top:456px" width="12" height="13" viewBox="0 0 12 13"><path d="M1.6 0.6H7.2L10.4 3.8V11.4a.6.6 0 0 1-.6.6H1.6a.6.6 0 0 1-.6-.6V1.2a.6.6 0 0 1 .6-.6z" fill="none" stroke="#9ba1ac" stroke-width="0.95"/><path d="M7 0.8V4H10.2" fill="none" stroke="#9ba1ac" stroke-width="0.9"/></svg>
<div class="t r" style="left:565.00px;top:457.00px;font-size:8.6px;line-height:10px;color:#4b505a;font-weight:400;">4.5domain</div>
<div style="position:absolute;left:635px;top:454.10px;width:48px;height:15.3px;background:#e9f6ef;border-radius:2px"></div>
<div class="t r" style="left:639.30px;top:457.60px;font-size:9.0px;line-height:10px;color:#44ab7c;font-weight:400;-webkit-text-stroke:0.3px #44ab7c;">Published</div>
<div class="t r" style="left:705.10px;top:458.00px;font-size:8.2px;line-height:9px;color:#4b505a;font-weight:400;">Chirag Patel</div>
<div class="t r" style="left:772.50px;top:457.00px;font-size:8.7px;line-height:10px;color:#4b505a;font-weight:400;">02-20&nbsp; 17:09</div>
<div class="t r" style="left:852.40px;top:457.00px;font-size:8.55px;line-height:10px;color:#4b505a;font-weight:400;">03-17&nbsp; 07:51</div>
<div style="position:absolute;left:309px;top:500.30px;width:626px;height:1px;background:#eef0f3"></div>
<svg style="position:absolute;left:311.0px;top:483px" width="10" height="11" viewBox="0 0 10 11"><path d="M0.6 0.4H9.4V10.4L5 8.6L0.6 10.4Z" fill="#4393ef"/><path d="M2.4 3H7.6M2.4 5.5H7.6" stroke="#fff" stroke-width="1.1"/></svg>
<div class="t r" style="left:325.90px;top:483.00px;font-size:8.4px;line-height:10px;color:#4b505a;font-weight:400;">Location_Code</div>
<div class="t r" style="left:467.20px;top:483.00px;font-size:8.5px;line-height:10px;color:#4b505a;font-weight:400;">domain</div>
<svg style="position:absolute;left:551px;top:482px" width="12" height="13" viewBox="0 0 12 13"><path d="M1.6 0.6H7.2L10.4 3.8V11.4a.6.6 0 0 1-.6.6H1.6a.6.6 0 0 1-.6-.6V1.2a.6.6 0 0 1 .6-.6z" fill="none" stroke="#9ba1ac" stroke-width="0.95"/><path d="M7 0.8V4H10.2" fill="none" stroke="#9ba1ac" stroke-width="0.9"/></svg>
<div class="t r" style="left:565.00px;top:483.00px;font-size:8.6px;line-height:10px;color:#4b505a;font-weight:400;">4.5domain</div>
<div style="position:absolute;left:635px;top:480.00px;width:48px;height:15.3px;background:#e9f6ef;border-radius:2px"></div>
<div class="t r" style="left:639.30px;top:483.60px;font-size:9.0px;line-height:10px;color:#44ab7c;font-weight:400;-webkit-text-stroke:0.3px #44ab7c;">Published</div>
<div class="t r" style="left:705.10px;top:484.00px;font-size:8.2px;line-height:9px;color:#4b505a;font-weight:400;">Chirag Patel</div>
<div class="t r" style="left:772.50px;top:483.00px;font-size:8.7px;line-height:10px;color:#4b505a;font-weight:400;">02-16&nbsp; 11:28</div>
<div class="t r" style="left:852.40px;top:483.00px;font-size:8.55px;line-height:10px;color:#4b505a;font-weight:400;">03-17&nbsp; 07:51</div>
<div style="position:absolute;left:309px;top:526.20px;width:626px;height:1px;background:#eef0f3"></div>
<svg style="position:absolute;left:311.0px;top:509px" width="10" height="11" viewBox="0 0 10 11"><path d="M0.6 0.4H9.4V10.4L5 8.6L0.6 10.4Z" fill="#4393ef"/><path d="M2.4 3H7.6M2.4 5.5H7.6" stroke="#fff" stroke-width="1.1"/></svg>
<div class="t r" style="left:325.90px;top:509.00px;font-size:8.4px;line-height:10px;color:#4b505a;font-weight:400;">Metrics _Unit</div>
<div class="t r" style="left:467.20px;top:509.00px;font-size:8.5px;line-height:10px;color:#4b505a;font-weight:400;">domain</div>
<svg style="position:absolute;left:551px;top:508px" width="12" height="13" viewBox="0 0 12 13"><path d="M1.6 0.6H7.2L10.4 3.8V11.4a.6.6 0 0 1-.6.6H1.6a.6.6 0 0 1-.6-.6V1.2a.6.6 0 0 1 .6-.6z" fill="none" stroke="#9ba1ac" stroke-width="0.95"/><path d="M7 0.8V4H10.2" fill="none" stroke="#9ba1ac" stroke-width="0.9"/></svg>
<div class="t r" style="left:565.00px;top:509.00px;font-size:8.6px;line-height:10px;color:#4b505a;font-weight:400;">4.5domain</div>
<div style="position:absolute;left:635px;top:505.90px;width:48px;height:15.3px;background:#e9f6ef;border-radius:2px"></div>
<div class="t r" style="left:639.30px;top:509.60px;font-size:9.0px;line-height:10px;color:#44ab7c;font-weight:400;-webkit-text-stroke:0.3px #44ab7c;">Published</div>
<div class="t r" style="left:705.10px;top:510.00px;font-size:8.2px;line-height:9px;color:#4b505a;font-weight:400;">Chirag Patel</div>
<div class="t r" style="left:772.50px;top:509.00px;font-size:8.7px;line-height:10px;color:#4b505a;font-weight:400;">02-16&nbsp; 11:28</div>
<div class="t r" style="left:852.40px;top:509.00px;font-size:8.55px;line-height:10px;color:#4b505a;font-weight:400;">03-17&nbsp; 07:51</div>
<div style="position:absolute;left:309px;top:552.10px;width:626px;height:1px;background:#eef0f3"></div>
<svg style="position:absolute;left:311.0px;top:534px" width="10" height="11" viewBox="0 0 10 11"><path d="M0.6 0.4H9.4V10.4L5 8.6L0.6 10.4Z" fill="#4393ef"/><path d="M2.4 3H7.6M2.4 5.5H7.6" stroke="#fff" stroke-width="1.1"/></svg>
<div class="t r" style="left:325.90px;top:535.00px;font-size:8.4px;line-height:10px;color:#4b505a;font-weight:400;">Metrics_Unit_Code</div>
<div class="t r" style="left:467.20px;top:535.00px;font-size:8.5px;line-height:10px;color:#4b505a;font-weight:400;">domain</div>
<svg style="position:absolute;left:551px;top:534px" width="12" height="13" viewBox="0 0 12 13"><path d="M1.6 0.6H7.2L10.4 3.8V11.4a.6.6 0 0 1-.6.6H1.6a.6.6 0 0 1-.6-.6V1.2a.6.6 0 0 1 .6-.6z" fill="none" stroke="#9ba1ac" stroke-width="0.95"/><path d="M7 0.8V4H10.2" fill="none" stroke="#9ba1ac" stroke-width="0.9"/></svg>
<div class="t r" style="left:565.00px;top:535.00px;font-size:8.6px;line-height:10px;color:#4b505a;font-weight:400;">4.5domain</div>
<div style="position:absolute;left:635px;top:531.80px;width:48px;height:15.3px;background:#e9f6ef;border-radius:2px"></div>
<div class="t r" style="left:639.30px;top:535.60px;font-size:9.0px;line-height:10px;color:#44ab7c;font-weight:400;-webkit-text-stroke:0.3px #44ab7c;">Published</div>
<div class="t r" style="left:705.10px;top:536.00px;font-size:8.2px;line-height:9px;color:#4b505a;font-weight:400;">Chirag Patel</div>
<div class="t r" style="left:772.50px;top:535.00px;font-size:8.7px;line-height:10px;color:#4b505a;font-weight:400;">02-16&nbsp; 11:28</div>
<div class="t r" style="left:852.40px;top:535.00px;font-size:8.55px;line-height:10px;color:#4b505a;font-weight:400;">03-17&nbsp; 07:51</div>
<div style="position:absolute;left:309px;top:578.00px;width:626px;height:1px;background:#eef0f3"></div>
<svg style="position:absolute;left:311.0px;top:560px" width="10" height="11" viewBox="0 0 10 11"><path d="M0.6 0.4H9.4V10.4L5 8.6L0.6 10.4Z" fill="#4393ef"/><path d="M2.4 3H7.6M2.4 5.5H7.6" stroke="#fff" stroke-width="1.1"/></svg>
<div class="t r" style="left:325.90px;top:561.00px;font-size:8.4px;line-height:10px;color:#4b505a;font-weight:400;">Net_weight</div>
<div class="t r" style="left:467.20px;top:561.00px;font-size:8.5px;line-height:10px;color:#4b505a;font-weight:400;">domain</div>
<svg style="position:absolute;left:551px;top:559px" width="12" height="13" viewBox="0 0 12 13"><path d="M1.6 0.6H7.2L10.4 3.8V11.4a.6.6 0 0 1-.6.6H1.6a.6.6 0 0 1-.6-.6V1.2a.6.6 0 0 1 .6-.6z" fill="none" stroke="#9ba1ac" stroke-width="0.95"/><path d="M7 0.8V4H10.2" fill="none" stroke="#9ba1ac" stroke-width="0.9"/></svg>
<div class="t r" style="left:565.00px;top:561.00px;font-size:8.6px;line-height:10px;color:#4b505a;font-weight:400;">4.5domain</div>
<div style="position:absolute;left:635px;top:557.70px;width:48px;height:15.3px;background:#e9f6ef;border-radius:2px"></div>
<div class="t r" style="left:639.30px;top:561.60px;font-size:9.0px;line-height:10px;color:#44ab7c;font-weight:400;-webkit-text-stroke:0.3px #44ab7c;">Published</div>
<div class="t r" style="left:705.10px;top:562.00px;font-size:8.2px;line-height:9px;color:#4b505a;font-weight:400;">Chirag Patel</div>
<div class="t r" style="left:772.50px;top:561.00px;font-size:8.7px;line-height:10px;color:#4b505a;font-weight:400;">02-13&nbsp; 15:19</div>
<div class="t r" style="left:852.40px;top:561.00px;font-size:8.55px;line-height:10px;color:#4b505a;font-weight:400;">03-17&nbsp; 07:51</div>
<div class="t r" style="left:309.20px;top:589.60px;font-size:9.4px;line-height:11px;color:#5a5f69;font-weight:400;">There are 5 items of data</div>
<svg style="position:absolute;left:778px;top:589px" width="9" height="10" viewBox="0 0 9 10"><path d="M6.2 3L3.6 5.8L6.2 8.6" fill="none" stroke="#b5b9c0" stroke-width="1.1"/></svg>
<div style="position:absolute;left:797px;top:585.5px;width:18.3px;height:18.6px;background:#f0f1f3;border-radius:2px"></div>
<div class="t r" style="left:803.60px;top:590.30px;font-size:8.9px;line-height:10px;color:#5a5f69;font-weight:400;">1</div>
<div class="t r" style="left:822.40px;top:590.30px;font-size:8.9px;line-height:10px;color:#5a5f69;font-weight:400;">2</div>
<div class="t r" style="left:841.90px;top:590.30px;font-size:8.9px;line-height:10px;color:#5a5f69;font-weight:400;">3</div>
<div class="t r" style="left:860.70px;top:590.30px;font-size:8.9px;line-height:10px;color:#5a5f69;font-weight:400;">4</div>
<svg style="position:absolute;left:880px;top:589px" width="9" height="10" viewBox="0 0 9 10"><path d="M3.6 3L6.3 5.8L3.6 8.6" fill="none" stroke="#3a3f48" stroke-width="1.3"/></svg>
<div class="t r" style="left:896.70px;top:590.30px;font-size:9.0px;line-height:10px;color:#5a5f69;font-weight:400;">go</div>
<div style="position:absolute;left:912.3px;top:585.5px;width:23px;height:19px;box-sizing:border-box;border:1px solid #dcdfe4;border-radius:3px;background:#fff"></div>
<div class="t r" style="left:922.20px;top:590.30px;font-size:8.9px;line-height:10px;color:#5a5f69;font-weight:400;">2</div>
</body></html>
